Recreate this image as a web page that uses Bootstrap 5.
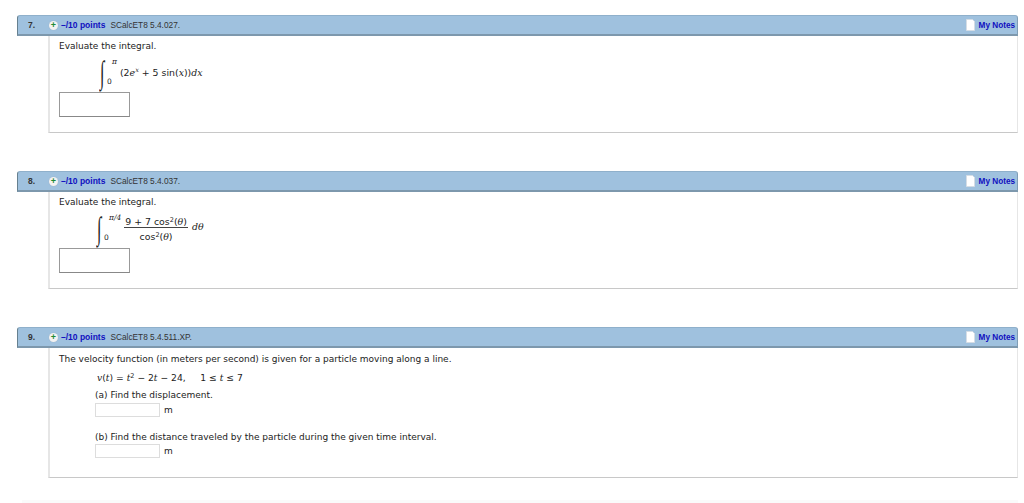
<!DOCTYPE html>
<html lang="en">
<head>
  <meta charset="UTF-8">
  <title>Assignment questions</title>
  <link href="https://cdn.jsdelivr.net/npm/bootstrap@5.3.3/dist/css/bootstrap.min.css" rel="stylesheet">
  <script src="https://cdn.jsdelivr.net/npm/bootstrap@5.3.3/dist/js/bootstrap.bundle.min.js"></script>
  <style>
    body { background: #fff; color: #222; font-family: "DejaVu Sans", sans-serif; font-size: 9px; line-height: 11px; overflow: hidden; }
    .sheet { padding: 15px 6px 0 17px; }
    .question { margin-bottom: 38px; }
    .question.last { margin-bottom: 22px; }
    .q-head { height: 21px; background: #9fc1de; border: 1px solid #7f9db5; border-top-color: #8fb0cb; border-left-color: #66808f; border-bottom: 2px solid #7d98ad; border-radius: 3px 3px 0 0; font-family: "Liberation Sans", sans-serif; font-size: 8.5px; padding: 0 2px 0 10px; }
    .q-num { width: 21px; font-weight: 700; color: #333; }
    .q-plus { width: 9px; height: 9px; margin-right: 3px; border-radius: 50%; background: #f2f2f2; box-shadow: 0 0 1px #9ab; color: #1f8a35; font-size: 9px; line-height: 9px; font-weight: 700; text-align: center; }
    .q-pts { color: #1010c0; font-weight: 700; margin-right: 5px; }
    .q-code { color: #333; font-size: 8.3px; }
    .q-notes { color: #1010c0; font-weight: 700; font-size: 8.2px; }
    .note-ico { margin-right: 4px; }
    .q-body { margin-left: 31px; padding: 5px 9px 0; background: #fff; border-left: 2px solid #e6e6e6; border-right: 1px solid #e6e6e6; border-bottom: 1px solid #c8c8c8; }
    .q7 { height: 97px; }
    .q8 { height: 97px; }
    .q9 { height: 130px; padding-top: 6px; }
    .next-strip { height: 6px; margin-left: 5px; background: #fafafa; }
    .ans-box { width: 71px; height: 25px; margin-top: 5px; background: #fff; border: 1px solid #999; border-bottom-color: #888; }
    .ans-small { width: 65px; height: 14px; background: #fff; border: 1px solid #ddd; margin-right: 4px; }
    .mathline { font-size: 9.4px; color: #222; }
    .mathline.vline { font-size: 9.2px; margin: 7px 0 0 38px; }
    .mathline i { font-family: "DejaVu Serif", serif; }
    .int-row { height: 30px; margin-top: 5px; margin-left: 41px; }
    .int-row.wide { margin-left: 38px; }
    .int-sign { display: inline-block; font-family: "Liberation Serif", serif; font-size: 32px; line-height: 30px; width: 9px; transform: scaleX(.5); transform-origin: left center; }
    .limits { font-size: 7.5px; line-height: 8px; height: 28px; margin-right: 3px; }
    .limits .low { margin-left: -2px; }
    .limits .up { margin-left: 3px; }
    .frac-wrap { margin-top: 4px; }
    .frac-top { border-bottom: 1px solid #444; padding: 0 1px; line-height: 10px; }
    .frac-bot { line-height: 13px; padding-top: 2px; }
    .d-theta { margin-bottom: 3px; }
    .sub-part { margin: 7px 0 0 36px; }
    .sub-part.next { margin-top: 15px; }
    .unit-row { margin: 1px 0 0 36px; }
    .unit-row.first { margin-top: 2px; }
    sup.tiny { font-size: 6.5px; }
  </style>
</head>
<body>
  <div class="sheet">

    <!-- question 7 -->
    <div class="question">
      <div class="q-head d-flex align-items-center">
        <span class="q-num">7.</span>
        <span class="q-plus">+</span>
        <span class="q-pts">–/10 points</span>
        <span class="q-code">SCalcET8 5.4.027.</span>
        <span class="q-notes d-flex align-items-center ms-auto">
          <svg class="note-ico" width="9" height="12" viewBox="0 0 9 12"><path d="M.5.5h6l2 2v9h-8z" fill="#fff" stroke="#d5dde5"/></svg>My Notes
        </span>
      </div>
      <div class="q-body q7">
        <div>Evaluate the integral.</div>
        <div class="mathline int-row d-flex align-items-center">
          <span class="int-sign">∫</span>
          <span class="limits d-flex flex-column justify-content-between"><i class="up">π</i><span class="low">0</span></span>
          <span>(2<i>e</i><sup class="tiny"><i>x</i></sup> + 5 sin(<i>x</i>))<i>dx</i></span>
        </div>
        <div class="ans-box"></div>
      </div>
    </div>

    <!-- question 8 -->
    <div class="question">
      <div class="q-head d-flex align-items-center">
        <span class="q-num">8.</span>
        <span class="q-plus">+</span>
        <span class="q-pts">–/10 points</span>
        <span class="q-code">SCalcET8 5.4.037.</span>
        <span class="q-notes d-flex align-items-center ms-auto">
          <svg class="note-ico" width="9" height="12" viewBox="0 0 9 12"><path d="M.5.5h6l2 2v9h-8z" fill="#fff" stroke="#d5dde5"/></svg>My Notes
        </span>
      </div>
      <div class="q-body q8">
        <div>Evaluate the integral.</div>
        <div class="mathline int-row wide d-flex align-items-center">
          <span class="int-sign">∫</span>
          <span class="limits d-flex flex-column justify-content-between"><i class="up">π/4</i><span class="low">0</span></span>
          <span class="frac-wrap d-flex flex-column text-center me-1">
            <span class="frac-top">9 + 7 cos<sup class="tiny">2</sup>(<i>θ</i>)</span>
            <span class="frac-bot">cos<sup class="tiny">2</sup>(<i>θ</i>)</span>
          </span>
          <i class="d-theta">dθ</i>
        </div>
        <div class="ans-box"></div>
      </div>
    </div>

    <!-- question 9 -->
    <div class="question last">
      <div class="q-head d-flex align-items-center">
        <span class="q-num">9.</span>
        <span class="q-plus">+</span>
        <span class="q-pts">–/10 points</span>
        <span class="q-code">SCalcET8 5.4.511.XP.</span>
        <span class="q-notes d-flex align-items-center ms-auto">
          <svg class="note-ico" width="9" height="12" viewBox="0 0 9 12"><path d="M.5.5h6l2 2v9h-8z" fill="#fff" stroke="#d5dde5"/></svg>My Notes
        </span>
      </div>
      <div class="q-body q9">
        <div>The velocity function (in meters per second) is given for a particle moving along a line.</div>
        <div class="mathline vline"><i>v</i>(<i>t</i>) = <i>t</i><sup class="tiny">2</sup> − 2<i>t</i> − 24, &nbsp;&nbsp;&nbsp; 1 ≤ <i>t</i> ≤ 7</div>
        <div class="sub-part">(a) Find the displacement.</div>
        <div class="unit-row first d-flex align-items-center"><span class="ans-small"></span>m</div>
        <div class="sub-part next">(b) Find the distance traveled by the particle during the given time interval.</div>
        <div class="unit-row d-flex align-items-center"><span class="ans-small"></span>m</div>
      </div>
    </div>

    <div class="next-strip"></div>
  </div>
</body>
</html>
